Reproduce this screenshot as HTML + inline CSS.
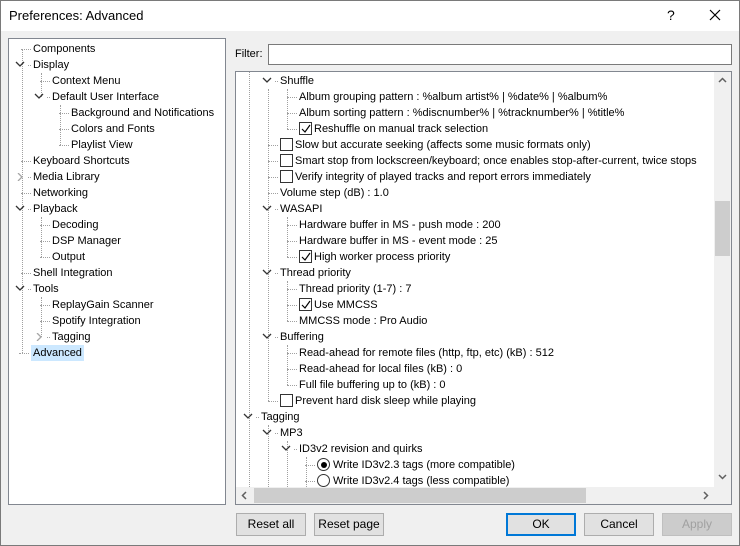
<!DOCTYPE html>
<html><head><style>
*{box-sizing:border-box;margin:0;padding:0}
body{width:740px;height:546px;background:#f0f0f0;font:11px "Liberation Sans",sans-serif;color:#000;position:relative;overflow:hidden}
.abs{position:absolute}
.frame{left:0;top:0;width:740px;height:546px;border:1px solid #7a7a7a;pointer-events:none}
.title{left:0;top:0;width:740px;height:31px;background:#fff}
.box{background:#fff;border:1px solid #828790}
.r{position:absolute;height:16px;line-height:16px;white-space:nowrap}
.r.l::before{content:"";position:absolute;left:-12px;width:10px;top:8px;border-top:1px dotted #a0a0a0}
.r.e::before{content:"";position:absolute;left:-5px;width:3px;top:8px;border-top:1px dotted #a0a0a0}
.chev{position:absolute;left:-18px;top:4px;width:10px;height:8px}
.v{position:absolute;border-left:1px dotted #a0a0a0;width:0}
.cb{display:inline-block;width:13px;height:13px;border:1px solid #333;background:#fff;vertical-align:-3px;margin-right:2px;position:relative}
.rd{display:inline-block;width:13px;height:13px;border:1px solid #333;border-radius:50%;background:#fff;vertical-align:-3px;margin-right:3px;position:relative}
.rd.on::after{content:"";position:absolute;left:2.5px;top:2.5px;width:6px;height:6px;border-radius:50%;background:#000}
.btn{position:absolute;top:513px;height:23px;width:70px;background:#e1e1e1;border:1px solid #adadad;text-align:center;line-height:21px;font-size:12px}
</style></head><body>
<div class="abs title"></div>
<div class="abs" style="left:9px;top:8px;font-size:13px">Preferences: Advanced</div>
<div class="abs" style="left:667px;top:7px;font-size:14px">?</div>
<svg class="abs" style="left:709px;top:9px" width="12" height="12"><path d="M1 1L11 11M11 1L1 11" stroke="#000" stroke-width="1.2"/></svg>

<div class="abs box" style="left:8px;top:38px;width:218px;height:467px;overflow:hidden">
<div style="position:relative;left:-9px;top:-38px">
<div class="v" style="left:22px;top:48px;height:304px"></div>
<div class="v" style="left:41px;top:72px;height:24px"></div>
<div class="v" style="left:60px;top:104px;height:40px"></div>
<div class="v" style="left:41px;top:216px;height:40px"></div>
<div class="v" style="left:41px;top:296px;height:40px"></div>
<div class="r l" style="left:33px;top:40px">Components</div>
<div class="r e" style="left:33px;top:56px"><svg class="chev"><path d="M1 1L5 5L9 1" stroke="#333" fill="none" stroke-width="1.3"/></svg>Display</div>
<div class="r l" style="left:52px;top:72px">Context Menu</div>
<div class="r e" style="left:52px;top:88px"><svg class="chev"><path d="M1 1L5 5L9 1" stroke="#333" fill="none" stroke-width="1.3"/></svg>Default User Interface</div>
<div class="r l" style="left:71px;top:104px">Background and Notifications</div>
<div class="r l" style="left:71px;top:120px">Colors and Fonts</div>
<div class="r l" style="left:71px;top:136px">Playlist View</div>
<div class="r l" style="left:33px;top:152px">Keyboard Shortcuts</div>
<div class="r e" style="left:33px;top:168px"><svg class="chev"><path d="M3 0L7 4L3 8" stroke="#a6a6a6" fill="none" stroke-width="1.3"/></svg>Media Library</div>
<div class="r l" style="left:33px;top:184px">Networking</div>
<div class="r e" style="left:33px;top:200px"><svg class="chev"><path d="M1 1L5 5L9 1" stroke="#333" fill="none" stroke-width="1.3"/></svg>Playback</div>
<div class="r l" style="left:52px;top:216px">Decoding</div>
<div class="r l" style="left:52px;top:232px">DSP Manager</div>
<div class="r l" style="left:52px;top:248px">Output</div>
<div class="r l" style="left:33px;top:264px">Shell Integration</div>
<div class="r e" style="left:33px;top:280px"><svg class="chev"><path d="M1 1L5 5L9 1" stroke="#333" fill="none" stroke-width="1.3"/></svg>Tools</div>
<div class="r l" style="left:52px;top:296px">ReplayGain Scanner</div>
<div class="r l" style="left:52px;top:312px">Spotify Integration</div>
<div class="r e" style="left:52px;top:328px"><svg class="chev"><path d="M3 0L7 4L3 8" stroke="#a6a6a6" fill="none" stroke-width="1.3"/></svg>Tagging</div>
<div class="r l" style="left:31px;top:344px;background:#cce8ff;padding:0 2px">Advanced</div>
</div></div>

<div class="abs" style="left:235px;top:48px">Filter:</div>
<div class="abs box" style="left:268px;top:44px;width:464px;height:21px;border-color:#7a7a7a"></div>

<div class="abs box" style="left:235px;top:71px;width:497px;height:434px;overflow:hidden">
<div class="abs" style="left:0;top:0;width:478px;height:415px;overflow:hidden">
<div style="position:relative;left:-236px;top:-71px">
<div class="v" style="left:249px;top:71px;height:415px"></div>
<div class="v" style="left:268px;top:88px;height:312px"></div>
<div class="v" style="left:287px;top:88px;height:40px"></div>
<div class="v" style="left:287px;top:216px;height:40px"></div>
<div class="v" style="left:287px;top:280px;height:40px"></div>
<div class="v" style="left:287px;top:344px;height:40px"></div>
<div class="v" style="left:268px;top:424px;height:62px"></div>
<div class="v" style="left:287px;top:440px;height:46px"></div>
<div class="v" style="left:306px;top:456px;height:30px"></div>
<div class="r e" style="left:280px;top:72px"><svg class="chev"><path d="M1 1L5 5L9 1" stroke="#333" fill="none" stroke-width="1.3"/></svg>Shuffle</div>
<div class="r l" style="left:299px;top:88px">Album grouping pattern : %album artist% | %date% | %album%</div>
<div class="r l" style="left:299px;top:104px">Album sorting pattern : %discnumber% | %tracknumber% | %title%</div>
<div class="r l" style="left:299px;top:120px"><span class="cb"><svg class="abs" style="left:1px;top:1px" width="10" height="10"><path d="M1 5L4 8L9 1" stroke="#000" fill="none" stroke-width="1.2"/></svg></span>Reshuffle on manual track selection</div>
<div class="r l" style="left:280px;top:136px"><span class="cb"></span>Slow but accurate seeking (affects some music formats only)</div>
<div class="r l" style="left:280px;top:152px"><span class="cb"></span>Smart stop from lockscreen/keyboard; once enables stop-after-current, twice stops</div>
<div class="r l" style="left:280px;top:168px"><span class="cb"></span>Verify integrity of played tracks and report errors immediately</div>
<div class="r l" style="left:280px;top:184px">Volume step (dB) : 1.0</div>
<div class="r e" style="left:280px;top:200px"><svg class="chev"><path d="M1 1L5 5L9 1" stroke="#333" fill="none" stroke-width="1.3"/></svg>WASAPI</div>
<div class="r l" style="left:299px;top:216px">Hardware buffer in MS - push mode : 200</div>
<div class="r l" style="left:299px;top:232px">Hardware buffer in MS - event mode : 25</div>
<div class="r l" style="left:299px;top:248px"><span class="cb"><svg class="abs" style="left:1px;top:1px" width="10" height="10"><path d="M1 5L4 8L9 1" stroke="#000" fill="none" stroke-width="1.2"/></svg></span>High worker process priority</div>
<div class="r e" style="left:280px;top:264px"><svg class="chev"><path d="M1 1L5 5L9 1" stroke="#333" fill="none" stroke-width="1.3"/></svg>Thread priority</div>
<div class="r l" style="left:299px;top:280px">Thread priority (1-7) : 7</div>
<div class="r l" style="left:299px;top:296px"><span class="cb"><svg class="abs" style="left:1px;top:1px" width="10" height="10"><path d="M1 5L4 8L9 1" stroke="#000" fill="none" stroke-width="1.2"/></svg></span>Use MMCSS</div>
<div class="r l" style="left:299px;top:312px">MMCSS mode : Pro Audio</div>
<div class="r e" style="left:280px;top:328px"><svg class="chev"><path d="M1 1L5 5L9 1" stroke="#333" fill="none" stroke-width="1.3"/></svg>Buffering</div>
<div class="r l" style="left:299px;top:344px">Read-ahead for remote files (http, ftp, etc) (kB) : 512</div>
<div class="r l" style="left:299px;top:360px">Read-ahead for local files (kB) : 0</div>
<div class="r l" style="left:299px;top:376px">Full file buffering up to (kB) : 0</div>
<div class="r l" style="left:280px;top:392px"><span class="cb"></span>Prevent hard disk sleep while playing</div>
<div class="r e" style="left:261px;top:408px"><svg class="chev"><path d="M1 1L5 5L9 1" stroke="#333" fill="none" stroke-width="1.3"/></svg>Tagging</div>
<div class="r e" style="left:280px;top:424px"><svg class="chev"><path d="M1 1L5 5L9 1" stroke="#333" fill="none" stroke-width="1.3"/></svg>MP3</div>
<div class="r e" style="left:299px;top:440px"><svg class="chev"><path d="M1 1L5 5L9 1" stroke="#333" fill="none" stroke-width="1.3"/></svg>ID3v2 revision and quirks</div>
<div class="r l" style="left:317px;top:456px"><span class="rd on"></span>Write ID3v2.3 tags (more compatible)</div>
<div class="r l" style="left:317px;top:472px"><span class="rd"></span>Write ID3v2.4 tags (less compatible)</div>
</div></div>
<div class="abs" style="left:478px;top:0;width:17px;height:415px;background:#f0f0f0"></div>
<svg class="abs" style="left:482px;top:5px" width="9" height="6"><path d="M1 5L4.5 1.5L8 5" stroke="#606060" fill="none" stroke-width="1.5"/></svg>
<div class="abs" style="left:479px;top:129px;width:15px;height:55px;background:#cdcdcd"></div>
<svg class="abs" style="left:482px;top:402px" width="9" height="6"><path d="M1 1L4.5 4.5L8 1" stroke="#606060" fill="none" stroke-width="1.5"/></svg>
<div class="abs" style="left:0;top:415px;width:495px;height:17px;background:#f0f0f0"></div>
<svg class="abs" style="left:5px;top:419px" width="6" height="9"><path d="M5 1L1.5 4.5L5 8" stroke="#606060" fill="none" stroke-width="1.5"/></svg>
<div class="abs" style="left:18px;top:416px;width:332px;height:15px;background:#cdcdcd"></div>
<svg class="abs" style="left:467px;top:419px" width="6" height="9"><path d="M1 1L4.5 4.5L1 8" stroke="#606060" fill="none" stroke-width="1.5"/></svg>
</div>

<div class="btn" style="left:236px">Reset all</div>
<div class="btn" style="left:314px">Reset page</div>
<div class="btn" style="left:506px;border:2px solid #0078d7;line-height:19px">OK</div>
<div class="btn" style="left:584px">Cancel</div>
<div class="btn" style="left:662px;background:#cccccc;border-color:#bfbfbf;color:#a0a0a0">Apply</div>
<div class="abs frame"></div>
</body></html>
